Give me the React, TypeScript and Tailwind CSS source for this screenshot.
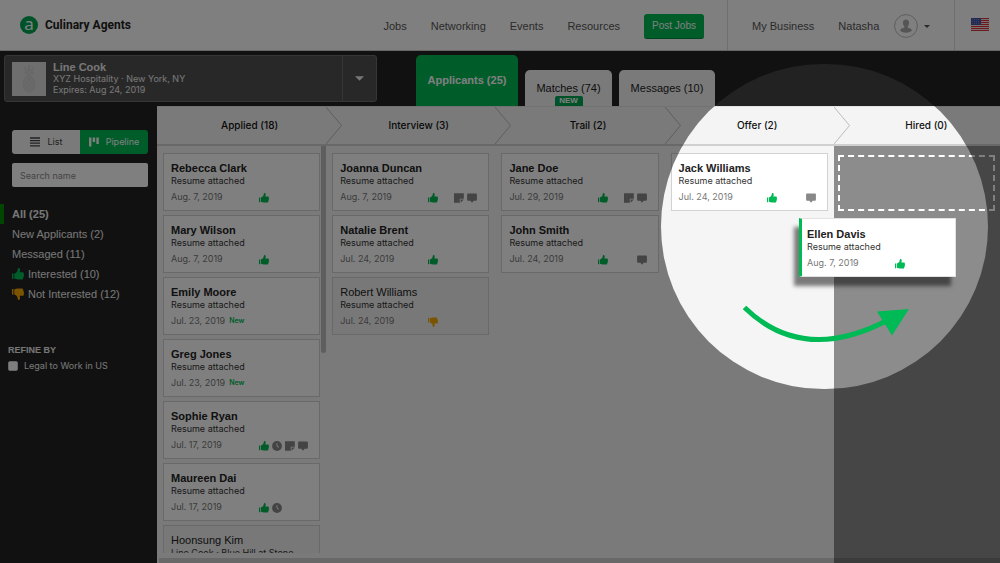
import type { ReactNode } from 'react';

type Mark = 'up' | 'down' | 'clock' | 'note' | 'chat' | null;

interface Candidate {
  name: string;
  detail?: string;
  date?: string;
  isNew?: boolean;
  muted?: boolean;
  marks?: Mark[];
}

interface Stage {
  title: string;
  candidates: Candidate[];
}

const stages: Stage[] = [
  {
    title: 'Applied (18)',
    candidates: [
      { name: 'Rebecca Clark', date: 'Aug. 7, 2019', marks: ['up'] },
      { name: 'Mary Wilson', date: 'Aug. 7, 2019', marks: ['up'] },
      { name: 'Emily Moore', date: 'Jul. 23, 2019', isNew: true },
      { name: 'Greg Jones', date: 'Jul. 23, 2019', isNew: true },
      { name: 'Sophie Ryan', date: 'Jul. 17, 2019', marks: ['up', 'clock', 'note', 'chat'] },
      { name: 'Maureen Dai', date: 'Jul. 17, 2019', marks: ['up', 'clock'] },
      { name: 'Hoonsung Kim', detail: 'Line Cook · Blue Hill at Stone', muted: true },
    ],
  },
  {
    title: 'Interview (3)',
    candidates: [
      { name: 'Joanna Duncan', date: 'Aug. 7, 2019', marks: ['up', null, 'note', 'chat'] },
      { name: 'Natalie Brent', date: 'Jul. 24, 2019', marks: ['up'] },
      { name: 'Robert Williams', date: 'Jul. 24, 2019', muted: true, marks: ['down'] },
    ],
  },
  {
    title: 'Trail (2)',
    candidates: [
      { name: 'Jane Doe', date: 'Jul. 29, 2019', marks: ['up', null, 'note', 'chat'] },
      { name: 'John Smith', date: 'Jul. 24, 2019', marks: ['up', null, null, 'chat'] },
    ],
  },
  {
    title: 'Offer (2)',
    candidates: [{ name: 'Jack Williams', date: 'Jul. 24, 2019', marks: ['up', null, null, 'chat'] }],
  },
  { title: 'Hired (0)', candidates: [] },
];

const THUMB =
  'M0 4.6h1.2v4.6H0z M1.9 4.6C3.3 4.3 4.5 3.1 4.7 1.600L4.900.5C5 -.1 6.500-.1 6.700 1c.1.900-.1 1.800-.4 2.500h2.400c1 0 1.400.8 1 1.500.5.4.5 1.100 0 1.500.3.6.1 1.200-.4 1.500.1.900-.3 1.500-1.100 1.500H5C3.900 9.500 3 9 1.900 8.800z';

function MarkIcon({ kind, className = 'size-[10px]' }: { kind: Mark; className?: string }) {
  if (kind === 'up')
    return (
      <svg viewBox="0 0 10 10" className={`${className} text-[#00ba55]`} role="img" aria-label="Interested">
        <path d={THUMB} fill="currentColor" />
      </svg>
    );
  if (kind === 'down')
    return (
      <svg viewBox="0 0 10 10" className={`${className} text-[#f5a800]`} role="img" aria-label="Not interested">
        <path d={THUMB} fill="currentColor" transform="matrix(1 0 0 -1 0 10)" />
      </svg>
    );
  if (kind === 'clock')
    return (
      <svg viewBox="0 0 10 10" className={`${className} text-[#888]`} role="img" aria-label="Reminder">
        <circle cx="5" cy="5" r="4.9" fill="currentColor" />
        <path d="M5 2.2V5.2L7 6.4" fill="none" stroke="#fff" strokeWidth="0.9" />
      </svg>
    );
  if (kind === 'note')
    return (
      <svg viewBox="0 0 10 10" className={`${className} text-[#888]`} role="img" aria-label="Note">
        <path d="M0 .2h9.8v5.6H5.8v4H0z M6.6 6.6h3.2L6.6 9.8z" fill="currentColor" />
      </svg>
    );
  if (kind === 'chat')
    return (
      <svg viewBox="0 0 10 10" className={`${className} text-[#888]`} role="img" aria-label="Message">
        <path d="M1 .4h8q.9 0 .9.9v5.500q0 .9-.9.9H6.700L5 9.800 3.400 7.700H1q-.9 0-.9-.9V1.300Q.1.400 1 .4z" fill="currentColor" />
      </svg>
    );
  return <span className={className} />;
}

function Caret({ className }: { className: string }) {
  return (
    <svg viewBox="0 0 10 5" className={className} aria-hidden="true">
      <path d="M0 0h10L5 5z" fill="currentColor" />
    </svg>
  );
}

function CardBody({ person }: { person: Candidate }) {
  return (
    <>
      <h3 className={`text-[11px] leading-[14px] text-[#222] ${person.muted ? 'font-normal' : 'font-bold'}`}>
        {person.name}
      </h3>
      <p className="font-[Inter] text-[9px] leading-3 whitespace-nowrap text-[#333]">
        {person.detail ?? 'Resume attached'}
      </p>
      {person.date && (
        <div className="mt-1 flex h-3 items-center justify-between">
          <span className="flex items-center gap-1 font-[Inter] text-[9px] leading-3 text-[#777]">
            {person.date}
            {person.isNew && <b className="text-[7px] font-semibold text-[#00ba55]">New</b>}
          </span>
          <span className="grid grid-cols-[repeat(4,10px)] gap-[3px] pt-px">
            {person.marks?.map((kind, i) => <MarkIcon key={i} kind={kind} />)}
          </span>
        </div>
      )}
    </>
  );
}

function CandidateCard({ person }: { person: Candidate }) {
  return (
    <li
      className={`h-[58px] shrink-0 border border-[#d2d2d2] pt-[7px] pr-[11px] pl-[7px] ${
        person.muted ? 'bg-[#f1f1f1]' : 'bg-white'
      }`}
    >
      <CardBody person={person} />
    </li>
  );
}

function StageHeader({ title, last }: { title: string; last: boolean }) {
  return (
    <div className="relative flex items-center justify-center border-t border-b-2 border-t-[#e4e4e4] border-b-[#d0d0d0] bg-[#f4f4f4] pl-4">
      <h2 className="font-[Inter] text-[10px] font-medium text-[#111]">{title}</h2>
      {!last && (
        <svg
          viewBox="0 0 16 37"
          preserveAspectRatio="none"
          className="absolute top-0 left-full z-10 h-full w-4"
          aria-hidden="true"
        >
          <path d="M0 0l15.5 18.5L0 37" fill="#f4f4f4" stroke="#bbb" strokeWidth="1" />
        </svg>
      )}
    </div>
  );
}

function NavLink({ children }: { children: ReactNode }) {
  return (
    <a href="#" className="text-[11px] text-[#555]">
      {children}
    </a>
  );
}

function Flag() {
  return (
    <svg viewBox="0 0 18 13" className="h-[13px] w-[18px]" role="img" aria-label="United States">
      <rect width="18" height="13" fill="#f3dede" />
      {[0, 2, 4, 6, 8, 10, 12].map((y) => (
        <rect key={y} y={y} width="18" height="1" fill="#d8343c" />
      ))}
      <rect width="10" height="7" fill="#4656a8" />
      <path d="M1 1.5h8M1 3.5h8M1 5.5h8" stroke="#8f9ad0" strokeWidth=".6" strokeDasharray="1 1" />
    </svg>
  );
}

function TopBar() {
  return (
    <header className="flex h-[51px] shrink-0 items-stretch border-b border-[#ccc] bg-white">
      <a href="#" className="flex items-center gap-[7px] pl-5">
        <span className="flex size-[18px] items-center justify-center rounded-full bg-[#00a651] pb-[3px] font-['Noto_Sans'] text-[17px] leading-none text-white">
          a
        </span>
        <span className="font-[Roboto] text-[12px] font-bold text-[#222]">Culinary Agents</span>
      </a>
      <nav className="ml-auto flex items-center gap-6 pt-[2px] pr-[23px]">
        <NavLink>Jobs</NavLink>
        <NavLink>Networking</NavLink>
        <NavLink>Events</NavLink>
        <NavLink>Resources</NavLink>
        <button className="h-[25px] w-[60px] rounded-[3px] border-b border-[#008a3e] bg-[#00ba55] text-[10px] whitespace-nowrap text-white">
          Post Jobs
        </button>
      </nav>
      <div className="flex w-[227px] items-center border-l border-[#ddd] pt-[2px] pl-6">
        <NavLink>My Business</NavLink>
        <button className="ml-6 flex items-center text-[11px] text-[#555]">
          Natasha
          <svg viewBox="0 0 24 24" className="ml-[15px] size-6" aria-hidden="true">
            <circle cx="12" cy="12" r="11.4" fill="none" stroke="#bbb" />
            <path
              d="M12 5.5c2 0 3.100 1.300 3.100 3.200 0 1.600-.6 2.800-1.400 3.600v1.300c1.500.6 4 1 4.200 3.200-1.500 1.300-3.500 1.900-5.900 1.900s-4.400-.6-5.900-1.900c.2-2.200 2.700-2.600 4.200-3.200v-1.300c-.8-.8-1.400-2-1.400-3.600 0-1.900 1.100-3.200 3.100-3.200z"
              fill="#aaa"
            />
          </svg>
          <Caret className="ml-[6px] h-[3px] w-[6px]" />
        </button>
      </div>
      <button className="flex w-[46px] items-start border-l border-[#ddd] pt-[18px] pl-4">
        <Flag />
      </button>
    </header>
  );
}

function JobBar() {
  return (
    <div className="flex h-[55px] shrink-0 items-stretch pl-1">
      <button className="my-1 flex w-[373px] items-stretch rounded-[3px] border border-[#6d6d6d] bg-[#505050] text-left text-[#eee]">
        <span className="flex flex-1 items-center gap-[7px] pl-[7px]">
          <svg viewBox="0 0 34 34" className="size-[34px] bg-[#dcdcdc]" aria-hidden="true">
            <g fill="none" stroke="#cfcfcf">
              <ellipse cx="17" cy="22" rx="6" ry="8" fill="#d4d4d4" />
              <path d="M12 18l9 10M12 22l6 7M14 15l9 9M22 18l-9 10M22 22l-6 7M20 15l-9 9" />
              <path d="M17 14l-5-4 3 1-3-6 4 4 1-6 1 6 4-4-3 6 3-1z" fill="#d4d4d4" />
            </g>
          </svg>
          <span className="flex flex-col font-[Inter] text-[9px] leading-[11px]">
            <b className="font-['Liberation_Sans'] text-[11px]">Line Cook</b>
            <span>XYZ Hospitality · New York, NY</span>
            <span>Expires: Aug 24, 2019</span>
          </span>
        </span>
        <span className="flex w-[34px] items-center justify-center border-l border-[#6d6d6d]">
          <Caret className="h-[5px] w-[9px]" />
        </span>
      </button>
      <div className="ml-[39px] flex items-end gap-[7px] text-[11px] whitespace-nowrap text-[#222]">
        <button className="h-[51px] w-[102px] rounded-t-[5px] bg-[#00ba55] font-bold text-white">Applicants (25)</button>
        <button className="flex h-9 w-[87px] flex-col items-center justify-end rounded-t-[5px] bg-[#f4f4f4]">
          <span className="leading-4">Matches (74)</span>
          <span className="h-[10px] w-7 rounded-t-[2px] bg-[#00a651] text-[8px] leading-[10px] font-bold text-white">
            NEW
          </span>
        </button>
        <button className="h-9 w-24 rounded-t-[5px] bg-[#f4f4f4]">Messages (10)</button>
      </div>
    </div>
  );
}

function Sidebar() {
  return (
    <aside className="w-[157px] shrink-0 pt-6 text-[#eee]">
      <div className="mr-[9px] ml-3 flex h-6 overflow-hidden rounded-[3px] font-[Inter] text-[9px]">
        <button className="flex flex-1 items-center justify-center gap-2 bg-[#f4f4f4] text-[#444]">
          <svg viewBox="0 0 10 10" className="size-[10px]" aria-hidden="true">
            <path d="M0 1h10M0 3.6h10M0 6.2h10M0 8.8h10" stroke="currentColor" strokeWidth="1.3" />
          </svg>
          List
        </button>
        <button className="flex flex-1 items-center justify-center gap-[7px] bg-[#00ba55] text-white">
          <svg viewBox="0 0 10 10" className="size-[10px]" aria-hidden="true">
            <path d="M0 .5h2.400v9H0zM3.700.5h2.400v4.500H3.700zM7.400.5h2.400v6.500H7.400z" fill="currentColor" />
          </svg>
          Pipeline
        </button>
      </div>
      <input
        type="text"
        aria-label="Search name"
        placeholder="Search name"
        className="mt-[9px] ml-3 block h-6 w-[136px] rounded-[2px] bg-white px-2 font-[Inter] text-[9px] text-[#333] placeholder:text-[#888]"
      />
      <ul className="mt-[17px] text-[11px] leading-5">
        <li className="border-l-4 border-[#008a00] pl-2 font-bold">
          <a href="#">All (25)</a>
        </li>
        <li className="pl-3">
          <a href="#">New Applicants (2)</a>
        </li>
        <li className="pl-3">
          <a href="#">Messaged (11)</a>
        </li>
        <li className="pl-3">
          <a href="#" className="flex items-center gap-1">
            <MarkIcon kind="up" className="size-3" />
            Interested (10)
          </a>
        </li>
        <li className="pl-3">
          <a href="#" className="flex items-center gap-1">
            <MarkIcon kind="down" className="size-3" />
            Not Interested (12)
          </a>
        </li>
      </ul>
      <fieldset className="mt-10 pl-2 font-[Inter] text-[9px]">
        <legend className="font-['Liberation_Sans'] leading-3 font-bold">REFINE BY</legend>
        <label className="mt-1 flex items-center gap-[6px] leading-3">
          <input type="checkbox" className="size-[10px] appearance-none rounded-[2px] border border-[#ccc] bg-white" />
          Legal to Work in US
        </label>
      </fieldset>
    </aside>
  );
}

function Board() {
  return (
    <main className="-mr-[3px] flex min-w-0 flex-1 flex-col bg-[#f5f5f5]">
      <div className="grid h-10 shrink-0 grid-cols-5">
        {stages.map((stage, i) => (
          <StageHeader key={stage.title} title={stage.title} last={i === stages.length - 1} />
        ))}
      </div>
      <div className="grid min-h-0 flex-1 grid-cols-5">
        {stages.slice(0, 4).map((stage, i) => (
          <div key={stage.title} className="relative min-h-0 overflow-hidden px-[6px] pt-[7px] pb-[10px]">
            <ul className="flex h-full flex-col gap-1 overflow-hidden">
              {stage.candidates.map((person) => (
                <CandidateCard key={person.name} person={person} />
              ))}
            </ul>
            {i === 0 && <div className="absolute top-0 right-0 h-[207px] w-[5px] rounded-b-full bg-[#bdbdbd]" />}
          </div>
        ))}
        <div className="bg-[#8c8c8c] pt-[9px] pr-2 pl-1">
          <div className="h-[56px] border-2 border-dashed border-white" />
        </div>
      </div>
    </main>
  );
}

export default function App() {
  return (
    <div className="relative flex h-screen flex-col overflow-hidden bg-[#222] font-['Liberation_Sans',Arial,sans-serif]">
      <TopBar />
      <JobBar />
      <div className="flex min-h-0 flex-1">
        <Sidebar />
        <Board />
      </div>
      <div className="absolute right-0 bottom-0 left-[159px] h-[5px] bg-black/15" />

      <div className="pointer-events-none absolute top-16 right-3 z-20 h-[325px] w-[327px] rounded-full shadow-[0_0_0_2000px_rgba(0,0,0,0.5)]" />

      <article className="absolute top-[218px] right-[44px] z-30 h-[59px] w-[157px] border border-l-3 border-[#e2e2e2] border-l-[#00ba55] bg-white pt-2 pr-[11px] pl-[5px] shadow-[-5px_9px_4px_rgba(0,0,0,0.5)]">
        <CardBody person={{ name: 'Ellen Davis', date: 'Aug. 7, 2019', marks: ['up'] }} />
      </article>

      <svg viewBox="0 0 172 42" className="absolute top-[303px] right-[88px] z-30 h-[42px] w-[172px]" aria-hidden="true">
        <path d="M4.5 4.500C42 41 89 48 148 17" fill="none" stroke="#00ba55" strokeWidth="5" />
        <path d="M169 6L137 8.500L152 32.500z" fill="#00ba55" />
      </svg>
    </div>
  );
}
